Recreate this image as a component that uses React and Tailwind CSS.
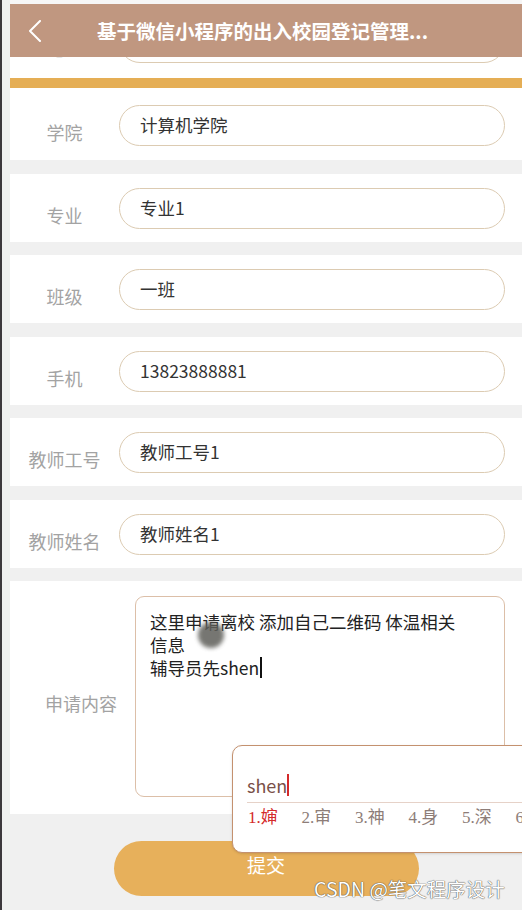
const cjk = { fontFamily: '"Noto Sans CJK SC", "Noto Sans", sans-serif' };
const serif = { fontFamily: '"Liberation Serif", "Noto Sans CJK SC", serif' };

const fields = [
  { label: "学院", value: "计算机学院", first: true },
  { label: "专业", value: "专业1" },
  { label: "班级", value: "一班" },
  { label: "手机", value: "13823888881" },
  { label: "教师工号", value: "教师工号1" },
  { label: "教师姓名", value: "教师姓名1" },
];

const candidates = ["1.婶", "2.审", "3.神", "4.身", "5.深", "6.沈"];

const FieldRow = ({ label, value, first }) => (
  <div
    className={`flex items-start bg-white ${
      first ? "h-[72px] pt-[17px]" : "h-[68px] pt-[14px]"
    }`}
  >
    <div className="w-[109px] shrink-0 text-center text-[18px] leading-[22px] text-[#a3a3a3] mt-[16px]">
      {label}
    </div>
    <div className="flex-1 mr-[17px] h-[41px] rounded-full border border-[#dccbb2] flex items-center pl-[20px] text-[17.5px] text-[#333]">
      {value}
    </div>
  </div>
);

export default function App() {
  return (
    <div
      className="relative w-[522px] h-[910px] overflow-hidden flex bg-[#f0f0f0]"
      style={cjk}
    >
      <div className="w-[2px] bg-[#3a3a3a]" />
      <div className="w-[8px] bg-[#eef2ee]" />

      <div className="flex-1 flex flex-col">
        <div className="h-[4px] bg-[#f6f6f6]" />

        <div className="h-[53px] bg-[#c09780] flex items-center">
          <div className="w-[87px] pl-[18px]">
            <svg width="14" height="22" viewBox="0 0 14 22" fill="none">
              <polyline
                points="12,1 2,11 12,21"
                stroke="white"
                strokeWidth="2"
                strokeLinecap="round"
                strokeLinejoin="round"
              />
            </svg>
          </div>
          <div className="text-white font-bold text-[19.5px] leading-none whitespace-nowrap">
            基于微信小程序的出入校园登记管理...
          </div>
        </div>

        <div className="h-[21px] bg-white overflow-hidden flex flex-col justify-end">
          <div className="flex items-start pb-[15px] shrink-0">
            <div className="w-[109px] shrink-0 text-center text-[18px] leading-[22px] text-[#a3a3a3] mt-[16px]">
              地址
            </div>
            <div className="flex-1 mr-[17px] h-[42px] rounded-full border border-[#dccbb2]" />
          </div>
        </div>

        <div className="h-[10px] bg-[#e5ae55]" />

        <div className="flex flex-col gap-[13.5px]">
          {fields.map((f) => (
            <FieldRow key={f.label} {...f} />
          ))}

          <div className="h-[233px] bg-white flex pt-[15px] pb-[17px]">
            <div className="w-[125px] shrink-0 pl-[35px] flex items-center pt-[14px] text-[18px] text-[#a3a3a3]">
              申请内容
            </div>
            <div className="flex-1 mr-[17px] rounded-[9px] border border-[#dcbfa8] pl-[14px] pt-[13px] text-[17.5px] leading-[23px] text-[#222]">
              <div>这里申请离校 添加自己二维码 体温相关</div>
              <div>信息</div>
              <div className="flex items-center">
                辅导员先shen
                <span className="inline-block w-[2px] h-[21px] bg-[#111] ml-[1px]" />
              </div>
            </div>
          </div>
        </div>

        <div className="pt-[27px] flex justify-center">
          <div className="w-[305px] h-[55px] rounded-full bg-[#e7b05b] flex items-center justify-center pb-[7px] text-white text-[19px]">
            提交
          </div>
        </div>
      </div>

      {/* touch indicator */}
      <div className="absolute left-[198px] top-[622px] w-[26px] h-[26px] rounded-full bg-[#5f5f5a] opacity-85 blur-[2px]" />

      {/* input method candidate window */}
      <div className="absolute left-[232px] top-[745px] w-[320px] h-[108px] bg-white rounded-[10px] border-[1.5px] border-[#c4916f] shadow-sm">
        <div className="pl-[14px] pt-[26px] flex items-center text-[18px] leading-[26px] text-[#7a5048]">
          shen
          <span className="inline-block w-[2px] h-[22px] bg-[#d42a2a]" />
        </div>
        <div className="ml-[14px] mt-[4px] h-px bg-[#e6d2c8]" />
        <div className="pl-[15px] pt-[3px] flex text-[17px] leading-[24px] text-[#8d7d78]" style={serif}>
          {candidates.map((c, i) => (
            <span
              key={c}
              className={`w-[53.5px] shrink-0 ${i === 0 ? "text-[#d42a2a]" : ""}`}
            >
              {c}
            </span>
          ))}
        </div>
      </div>

      <div className="absolute left-[314px] top-[876px] text-[19.5px] leading-[26px] text-white whitespace-nowrap [text-shadow:0_0_1px_#444,0_0_1px_#444]">
        CSDN @笔文程序设计
      </div>
    </div>
  );
}
